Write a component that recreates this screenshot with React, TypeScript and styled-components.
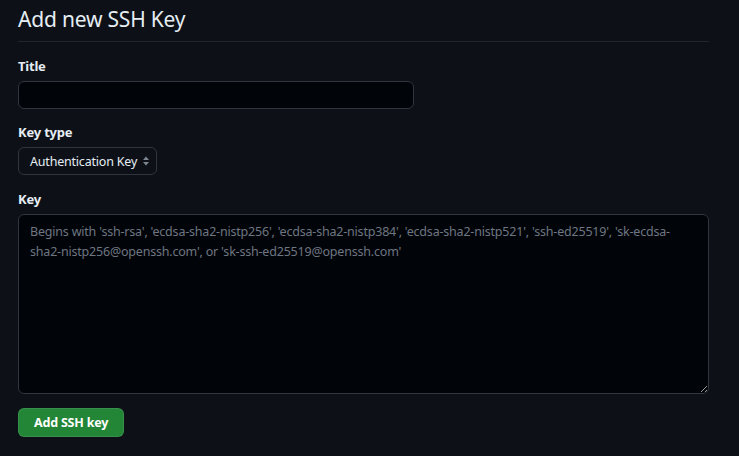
import React from 'react'
import styled, { createGlobalStyle } from 'styled-components'

const GlobalStyle = createGlobalStyle`
  html, body {
    margin: 0;
    padding: 0;
    background: #0d1117;
    color-scheme: dark;
  }
  body {
    font-family: "Noto Sans", "Open Sans", sans-serif;
    color: #e6edf3;
    letter-spacing: -0.2px;
  }
`

const Page = styled.div`
  padding: 0 30px 0 18px;
  min-height: 456px;
  box-sizing: border-box;
`

const Heading = styled.h2`
  margin: 0;
  padding: 4px 0 7px;
  font-size: 21px;
  font-weight: 400;
  line-height: 30px;
  color: #e6edf3;
  border-bottom: 1px solid #21262d;
`

const Form = styled.form`
  display: flex;
  flex-direction: column;
`

const FormGroup = styled.div<{ $gap?: number }>`
  margin-top: ${({ $gap }) => $gap ?? 14}px;
  display: flex;
  flex-direction: column;
  align-items: flex-start;
`

const Label = styled.label`
  font-size: 13px;
  font-weight: 700;
  line-height: 20px;
  margin-bottom: 5px;
  color: #e6edf3;
`

const TextInput = styled.input`
  box-sizing: border-box;
  width: 396px;
  height: 28px;
  padding: 4px 12px;
  font: inherit;
  font-size: 12.5px;
  color: #e6edf3;
  background: #010409;
  border: 1px solid #30363d;
  border-radius: 6px;
  outline: none;
`

const SelectBox = styled.div`
  box-sizing: border-box;
  display: flex;
  align-items: center;
  gap: 5px;
  height: 28px;
  padding: 0 6px 0 11px;
  font-size: 12.5px;
  color: #e6edf3;
  background: #0d1117;
  border: 1px solid #30363d;
  border-radius: 6px;
`

const KeyArea = styled.textarea`
  box-sizing: border-box;
  width: 100%;
  height: 180px;
  padding: 7px 11px;
  font: inherit;
  font-size: 12.5px;
  line-height: 20px;
  letter-spacing: -0.2px;
  color: #e6edf3;
  background: #010409;
  border: 1px solid #30363d;
  border-radius: 6px;
  outline: none;
  resize: vertical;
  &::placeholder {
    color: #6e7681;
  }
`

const SubmitButton = styled.button`
  align-self: flex-start;
  margin-top: 14px;
  box-sizing: border-box;
  height: 29px;
  padding: 0 15px;
  font-family: inherit;
  font-size: 12.5px;
  font-weight: 700;
  letter-spacing: -0.2px;
  color: #ffffff;
  background: #238636;
  border: 1px solid rgba(240, 246, 252, 0.1);
  border-radius: 6px;
`

function UpDown() {
  return (
    <svg width="8" height="12" viewBox="0 0 8 12" fill="#7d8590">
      <path d="M4 1.5 L7 5 H1 Z" />
      <path d="M4 10.5 L7 7 H1 Z" />
    </svg>
  )
}

export default function App() {
  return (
    <Page>
      <GlobalStyle />
      <Heading>Add new SSH Key</Heading>
      <Form onSubmit={(e) => e.preventDefault()}>
        <FormGroup>
          <Label htmlFor="ssh_key_title">Title</Label>
          <TextInput id="ssh_key_title" type="text" />
        </FormGroup>
        <FormGroup $gap={13}>
          <Label>Key type</Label>
          <SelectBox>
            Authentication Key
            <UpDown />
          </SelectBox>
        </FormGroup>
        <FormGroup>
          <Label htmlFor="ssh_key_key">Key</Label>
          <KeyArea
            id="ssh_key_key"
            placeholder="Begins with 'ssh-rsa', 'ecdsa-sha2-nistp256', 'ecdsa-sha2-nistp384', 'ecdsa-sha2-nistp521', 'ssh-ed25519', 'sk-ecdsa-sha2-nistp256@openssh.com', or 'sk-ssh-ed25519@openssh.com'"
          />
        </FormGroup>
        <SubmitButton type="submit">Add SSH key</SubmitButton>
      </Form>
    </Page>
  )
}
